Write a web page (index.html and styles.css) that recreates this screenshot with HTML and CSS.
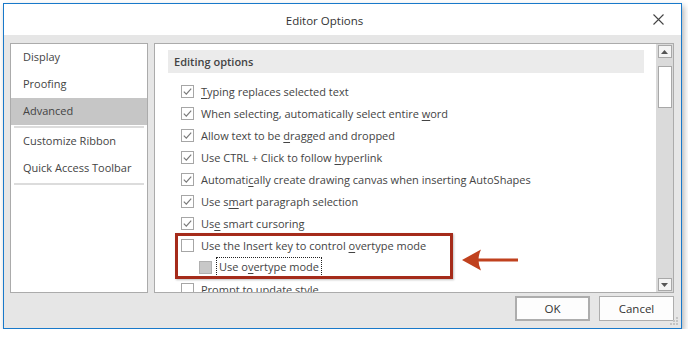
FILE: index.html
```html
<!DOCTYPE html>
<html lang="en">
<head>
    <meta charset="UTF-8">
    <title>Editor Options</title>
    <link rel="stylesheet" href="styles.css">
</head>
<body>
    <div class="dialog">
        <div class="titlebar">
            <span class="title">Editor Options</span>
            <span class="close">
                <svg width="11" height="11" viewBox="0 0 11 11"><path d="M0.5 0.5L10.5 10.5M10.5 0.5L0.5 10.5" stroke="#444" stroke-width="1.1" fill="none"/></svg>
            </span>
        </div>

        <div class="main">
            <div class="panes">
                <ul class="nav">
                    <li>Display</li>
                    <li>Proofing</li>
                    <li class="active">Advanced</li>
                    <li class="sep"></li>
                    <li>Customize Ribbon</li>
                    <li>Quick Access Toolbar</li>
                    <li class="sep"></li>
                </ul>

                <div class="pane">
                    <div class="content">
                        <div class="section">Editing options</div>

                        <div class="opt"><span class="box"><svg width="11" height="11" viewBox="0 0 11 11"><path d="M1.8 5.6L4.3 8.1L9.2 2.6" stroke="#7a7a7a" stroke-width="1.2" fill="none"/></svg></span><span class="label"><u>T</u>yping replaces selected text</span></div>
                        <div class="opt"><span class="box"><svg width="11" height="11" viewBox="0 0 11 11"><path d="M1.8 5.6L4.3 8.1L9.2 2.6" stroke="#7a7a7a" stroke-width="1.2" fill="none"/></svg></span><span class="label">When selecting, automatically select entire <u>w</u>ord</span></div>
                        <div class="opt"><span class="box"><svg width="11" height="11" viewBox="0 0 11 11"><path d="M1.8 5.6L4.3 8.1L9.2 2.6" stroke="#7a7a7a" stroke-width="1.2" fill="none"/></svg></span><span class="label">Allow text to be <u>d</u>ragged and dropped</span></div>
                        <div class="opt"><span class="box"><svg width="11" height="11" viewBox="0 0 11 11"><path d="M1.8 5.6L4.3 8.1L9.2 2.6" stroke="#7a7a7a" stroke-width="1.2" fill="none"/></svg></span><span class="label">Use CTRL + Click to follow <u>h</u>yperlink</span></div>
                        <div class="opt"><span class="box"><svg width="11" height="11" viewBox="0 0 11 11"><path d="M1.8 5.6L4.3 8.1L9.2 2.6" stroke="#7a7a7a" stroke-width="1.2" fill="none"/></svg></span><span class="label">Automati<u>c</u>ally create drawing canvas when inserting AutoShapes</span></div>
                        <div class="opt"><span class="box"><svg width="11" height="11" viewBox="0 0 11 11"><path d="M1.8 5.6L4.3 8.1L9.2 2.6" stroke="#7a7a7a" stroke-width="1.2" fill="none"/></svg></span><span class="label">Use s<u>m</u>art paragraph selection</span></div>
                        <div class="opt"><span class="box"><svg width="11" height="11" viewBox="0 0 11 11"><path d="M1.8 5.6L4.3 8.1L9.2 2.6" stroke="#7a7a7a" stroke-width="1.2" fill="none"/></svg></span><span class="label">Us<u>e</u> smart cursoring</span></div>
                        <div class="opt"><span class="box"></span><span class="label">Use the Insert key to control <u>o</u>vertype mode</span></div>
                        <div class="opt sub"><span class="box disabled"></span><span class="label focus">Use o<u>v</u>ertype mode</span></div>
                        <div class="opt"><span class="box"></span><span class="label">Prompt to update style</span></div>
                    </div>

                    <div class="scrollbar">
                        <span class="sb-btn"><svg width="7" height="4" viewBox="0 0 7 4"><path d="M0 4L3.5 0L7 4Z" fill="#555"/></svg></span>
                        <span class="sb-thumb"></span>
                        <span class="sb-track"></span>
                        <span class="sb-btn"><svg width="7" height="4" viewBox="0 0 7 4"><path d="M0 0L7 0L3.5 4Z" fill="#555"/></svg></span>
                    </div>
                </div>
            </div>

            <div class="buttons">
                <button class="btn default">OK</button>
                <button class="btn">Cancel</button>
            </div>
        </div>

        <!-- annotation -->
        <div class="callout"></div>
        <svg class="arrow" width="58" height="24" viewBox="0 0 58 24">
            <path d="M16 10.6H56V13.4H16Z" fill="#c0411e"/>
            <path d="M0 12L19 1.5Q14 12 19 22.5Z" fill="#c0411e"/>
        </svg>

        <svg class="grip" width="10" height="10" viewBox="0 0 10 10">
            <rect x="7" y="1" width="2" height="2" fill="#c4c4c4"/>
            <rect x="4" y="4" width="2" height="2" fill="#c4c4c4"/>
            <rect x="7" y="4" width="2" height="2" fill="#c4c4c4"/>
            <rect x="1" y="7" width="2" height="2" fill="#c4c4c4"/>
            <rect x="4" y="7" width="2" height="2" fill="#c4c4c4"/>
            <rect x="7" y="7" width="2" height="2" fill="#c4c4c4"/>
        </svg>
    </div>
</body>
</html>
```

FILE: styles.css
```css
/* dasar halaman */
body {
    margin: 0;
    padding: 3px 0 0 3px;
    background: #fff;
    font-family: "Open Sans", "Noto Sans", sans-serif;
    font-size: 11px;
    color: #444;
}

/* jendela dialog */
.dialog {
    position: relative;
    width: 677px;
    height: 324px;
    border: 1px solid #1979ca;
    background: #e6e6e6;
    box-shadow: 2px 3px 6px rgba(0, 0, 0, 0.3);
    display: flex;
    flex-direction: column;
}

.titlebar {
    height: 31px;
    background: #fff;
    display: flex;
    align-items: center;
    padding-left: 10px;
}

.title {
    flex: 1;
    text-align: center;
    font-size: 11.5px;
    color: #333;
    padding-top: 1px;
}

.close {
    width: 46px;
    display: flex;
    justify-content: center;
    align-items: center;
}

.main {
    flex: 1;
    padding: 8px 7px 7px 6px;
    display: flex;
    flex-direction: column;
}

.panes {
    display: flex;
    gap: 6px;
    height: 250px;
}

/* menu kiri */
.nav {
    list-style: none;
    margin: 0;
    padding: 0;
    width: 136px;
    background: #fff;
    border: 1px solid #ababab;
}

.nav li {
    height: 27px;
    line-height: 26px;
    padding-left: 12px;
}

.nav li.active {
    background: #c6c6c6;
}

.nav li.sep {
    height: 2px;
    margin: 1px 3px 0;
    padding: 0;
    background: #dcdcdc;
}

/* panel kanan */
.pane {
    flex: 1;
    display: flex;
    background: #fff;
    border: 1px solid #ababab;
    overflow: hidden;
}

.content {
    flex: 1;
    padding: 6px 12px 0 13px;
    overflow: hidden;
}

.section {
    height: 23px;
    line-height: 23px;
    padding-left: 6px;
    background: #ebebeb;
    font-weight: 600;
    color: #444;
    margin-bottom: 7px;
}

.opt {
    height: 22px;
    display: flex;
    align-items: center;
    padding-left: 13px;
    white-space: nowrap;
}

.opt u {
    text-decoration-thickness: 1px;
    text-underline-offset: 2px;
}

.box {
    width: 11px;
    height: 11px;
    border: 1px solid #a6a6a6;
    background: #fff;
    margin-right: 7px;
    flex-shrink: 0;
    display: flex;
}

.opt.sub {
    padding-left: 31px;
}

.box.disabled {
    background: #c8c8c8;
    border-color: #b0b0b0;
    margin-right: 4px;
}

.focus {
    border: 1px dotted #222;
    padding: 1px 2px 2px 2px;
}

/* scrollbar */
.scrollbar {
    width: 17px;
    background: #dadada;
    display: flex;
    flex-direction: column;
    align-items: center;
    padding: 1px 0;
}

.sb-btn {
    width: 14px;
    height: 13px;
    background: #f4f4f4;
    border: 1px solid #a8a8a8;
    display: flex;
    justify-content: center;
    align-items: center;
    box-sizing: border-box;
}

.sb-thumb {
    width: 14px;
    height: 42px;
    margin-top: 8px;
    background: #fff;
    border: 1px solid #a8a8a8;
    box-sizing: border-box;
}

.sb-track {
    flex: 1;
}

/* tombol */
.buttons {
    display: flex;
    justify-content: flex-end;
    gap: 9px;
    margin-top: 3px;
}

.btn {
    width: 75px;
    height: 25px;
    font-family: inherit;
    font-size: 11.5px;
    color: #333;
    background: #fdfdfd;
    border: 1px solid #adadad;
    padding: 0;
}

.btn.default {
    border: 2px solid #adadad;
}

/* anotasi merah */
.callout {
    position: absolute;
    left: 171px;
    top: 229px;
    width: 272px;
    height: 40px;
    border: 3px solid #a52b1a;
    box-shadow: 1px 1px 2px rgba(0, 0, 0, 0.25);
}

.arrow {
    position: absolute;
    left: 458px;
    top: 244px;
}

.grip {
    position: absolute;
    right: 2px;
    bottom: 2px;
}
```
